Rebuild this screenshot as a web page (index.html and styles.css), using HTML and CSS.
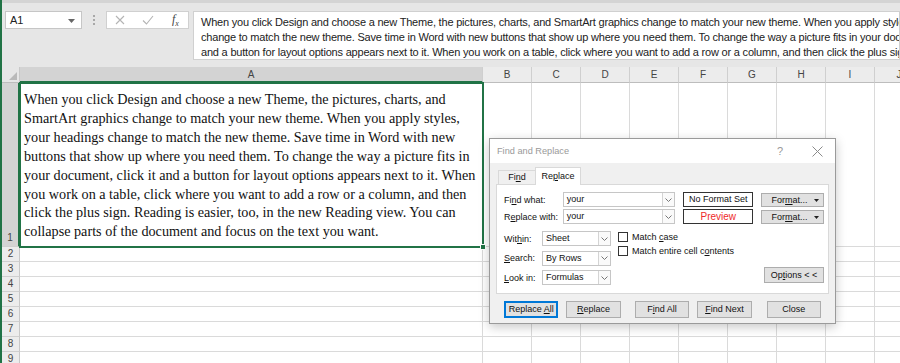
FILE: index.html
```
<!DOCTYPE html>
<html>
<head>
<meta charset="utf-8">
<link rel="stylesheet" href="styles.css">
</head>
<body>
<div class="app">
  <div class="topstrip"></div>
  <div class="fbar">
    <div class="namebox"><span>A1</span><svg class="nb-arrow" width="7" height="4" viewBox="0 0 7 4"><path d="M0 0H7L3.5 4Z" fill="#666"/></svg></div>
    <div class="dots"><i></i><i></i><i></i></div>
    <div class="fnbox">
      <svg class="ico-x" width="10" height="10" viewBox="0 0 10 10"><path d="M1 1L9 9M9 1L1 9" stroke="#b4b4b4" stroke-width="1.1" fill="none"/></svg>
      <svg class="ico-ok" width="12" height="10" viewBox="0 0 12 10"><path d="M1 5.5L4.5 9L11 1" stroke="#b4b4b4" stroke-width="1.1" fill="none"/></svg>
      <span class="fx"><i>f</i><sub>x</sub></span>
    </div>
    <div class="formula">
      <div>When you click Design and choose a new Theme, the pictures, charts, and SmartArt graphics change to match your new theme. When you apply styles, your headings</div>
      <div>change to match the new theme. Save time in Word with new buttons that show up where you need them. To change the way a picture fits in your document, click it</div>
      <div>and a button for layout options appears next to it. When you work on a table, click where you want to add a row or a column, and then click the plus sign.</div>
    </div>
  </div>
  <div class="sheet">
    <div class="corner"><svg width="8" height="8" viewBox="0 0 8 8"><path d="M8 0V8H0Z" fill="#b9b9b9"/></svg></div>
    <div class="ch sel">A</div>
    <div class="ch">B</div>
    <div class="ch">C</div>
    <div class="ch">D</div>
    <div class="ch">E</div>
    <div class="ch">F</div>
    <div class="ch">G</div>
    <div class="ch">H</div>
    <div class="ch">I</div>
    <div class="ch">J</div>

    <div class="rh sel">1</div>
    <div class="cell r1 a1">
      <div class="a1text">When you click Design and choose a new Theme, the pictures, charts, and<br>SmartArt graphics change to match your new theme. When you apply styles,<br>your headings change to match the new theme. Save time in Word with new<br>buttons that show up where you need them. To change the way a picture fits in<br>your document, click it and a button for layout options appears next to it. When<br>you work on a table, click where you want to add a row or a column, and then<br>click the plus sign. Reading is easier, too, in the new Reading view. You can<br>collapse parts of the document and focus on the text you want.</div>
      <span class="handle"></span>
    </div>
    <div class="cell r1"></div><div class="cell r1"></div><div class="cell r1"></div><div class="cell r1"></div><div class="cell r1"></div><div class="cell r1"></div><div class="cell r1"></div><div class="cell r1"></div><div class="cell r1"></div>
  </div>
  <div class="sheet" id="rows"></div>

  <div class="dialog">
    <div class="titlebar">
      <span class="title">Find and Replace</span>
      <span class="qm">?</span>
      <svg class="closex" width="11" height="11" viewBox="0 0 11 11"><path d="M0.5 0.5L10.5 10.5M10.5 0.5L0.5 10.5" stroke="#8a8a8a" stroke-width="1" fill="none"/></svg>
    </div>
    <div class="dbody">
      <div class="tabs">
        <div class="tab">Fi<u>n</u>d</div>
        <div class="tab active">Re<u>p</u>lace</div>
      </div>
      <div class="panel">
        <div class="frow">
          <label class="lbl">Fi<u>n</u>d what:</label>
          <div class="combo wide"><span>your</span><b class="dd"><svg width="7" height="4" viewBox="0 0 7 4"><path d="M0.5 0.5L3.5 3.5L6.5 0.5" stroke="#777" fill="none"/></svg></b></div>
          <div class="fmtbox">No Format Set</div>
          <div class="btn fmt"><span>For<u>m</u>at...</span><svg width="5" height="3" viewBox="0 0 5 3"><path d="M0 0H5L2.5 3Z" fill="#222"/></svg></div>
        </div>
        <div class="frow">
          <label class="lbl">R<u>e</u>place with:</label>
          <div class="combo wide"><span>your</span><b class="dd"><svg width="7" height="4" viewBox="0 0 7 4"><path d="M0.5 0.5L3.5 3.5L6.5 0.5" stroke="#777" fill="none"/></svg></b></div>
          <div class="fmtbox preview">Preview</div>
          <div class="btn fmt"><span>For<u>m</u>at...</span><svg width="5" height="3" viewBox="0 0 5 3"><path d="M0 0H5L2.5 3Z" fill="#222"/></svg></div>
        </div>
        <div class="opts">
          <div class="optcol">
            <div class="orow"><label class="lbl2">Wit<u>h</u>in:</label><div class="combo small"><span>Sheet</span><b class="dd"><svg width="7" height="4" viewBox="0 0 7 4"><path d="M0.5 0.5L3.5 3.5L6.5 0.5" stroke="#777" fill="none"/></svg></b></div></div>
            <div class="orow"><label class="lbl2"><u>S</u>earch:</label><div class="combo small"><span>By Rows</span><b class="dd"><svg width="7" height="4" viewBox="0 0 7 4"><path d="M0.5 0.5L3.5 3.5L6.5 0.5" stroke="#777" fill="none"/></svg></b></div></div>
            <div class="orow"><label class="lbl2"><u>L</u>ook in:</label><div class="combo small"><span>Formulas</span><b class="dd"><svg width="7" height="4" viewBox="0 0 7 4"><path d="M0.5 0.5L3.5 3.5L6.5 0.5" stroke="#777" fill="none"/></svg></b></div></div>
          </div>
          <div class="checks">
            <div class="chk"><span class="box"></span><span>Match <u>c</u>ase</span></div>
            <div class="chk"><span class="box"></span><span>Match entire cell c<u>o</u>ntents</span></div>
          </div>
          <div class="optbtn"><div class="btn options"><span>Op<u>t</u>ions &lt; &lt;</span></div></div>
        </div>
      </div>
      <div class="btnrow">
        <div class="btn act default"><span>Replace <u>A</u>ll</span></div>
        <div class="btn act"><span><u>R</u>eplace</span></div>
        <div class="btn act gap"><span>F<u>i</u>nd All</span></div>
        <div class="btn act"><span><u>F</u>ind Next</span></div>
        <div class="btn act gap2"><span>Close</span></div>
      </div>
    </div>
  </div>
</div>
<script>
  var r = document.getElementById('rows');
  var h = '';
  for (var i = 2; i <= 10; i++) {
    h += '<div class="rh">' + i + '</div>';
    for (var j = 0; j < 10; j++) h += '<div class="cell"></div>';
  }
  r.innerHTML = h;
</script>
</body>
</html>
```
FILE: styles.css
```
* { box-sizing: border-box; }
html, body { margin: 0; padding: 0; }
body { width: 900px; height: 363px; overflow: hidden; background: #fff; }
.app { position: relative; width: 900px; height: 363px; overflow: hidden; border-left: 2px solid #217346; background: #e6e6e6; }

.topstrip { height: 3px; background: #d4d4d4; }
.fbar { display: flex; align-items: flex-start; height: 64px; padding-top: 8px; padding-left: 3px; }
.namebox { width: 77px; height: 18px; background: #fff; border: 1px solid #c6c6c6; display: flex; align-items: center; justify-content: space-between; padding: 0 6px 0 4px; font: 11px "Liberation Sans", sans-serif; color: #222; }
.nb-arrow { margin-top: 1px; }
.dots { width: 24px; height: 18px; display: flex; flex-direction: column; align-items: center; justify-content: center; gap: 2px; }
.dots i { width: 2px; height: 2px; background: #a8a8a8; display: block; }
.fnbox { width: 83px; height: 18px; background: #fff; border: 1px solid #d0d0d0; display: flex; align-items: center; padding-left: 8px; }
.ico-ok { margin-left: 17px; }
.fx { margin-left: 18px; font: italic 12px "Liberation Serif", serif; color: #444; }
.fx i { font-style: italic; }
.fx sub { font-size: 8px; }
.formula { margin-left: 4px; flex: 1; min-width: 0; height: 49px; background: #fff; border: 1px solid #d0d0d0; padding: 3px 0 0 7px; overflow: hidden; font: 11px/15px "Liberation Sans", sans-serif; letter-spacing: -0.2px; color: #222; white-space: nowrap; }

.sheet { display: grid; grid-template-columns: 18px 463px repeat(9, 49px); }
.corner { height: 16px; background: #e6e6e6; border-right: 1px solid #c8c8c8; border-bottom: 1px solid #bdbdbd; display: flex; align-items: flex-end; justify-content: flex-end; padding: 0 2px 2px 0; }
.ch { height: 16px; background: #ececec; border-right: 1px solid #cfcfcf; border-bottom: 1px solid #bdbdbd; font: 10px/15px "Liberation Sans", sans-serif; color: #444; text-align: center; }
.ch.sel { background: #d3d3d3; border-bottom: 2px solid #217346; }
.rh { background: #ececec; border-right: 1px solid #c8c8c8; border-bottom: 1px solid #cfcfcf; font: 10px/14px "Liberation Sans", sans-serif; color: #444; text-align: center; height: 15px; display: flex; align-items: flex-end; justify-content: center; }
.rh.sel { height: 164px; background: #d3d3d3; border-right: 2px solid #217346; padding-bottom: 1px; }
.cell { background: #fff; border-right: 1px solid #dadada; border-bottom: 1px solid #dadada; height: 15px; }
.cell.r1 { height: 164px; }
.cell.a1 { position: relative; outline: 2px solid #217346; outline-offset: -1px; z-index: 1; padding: 7px 0 0 4px; }
.a1text { font: 14.2px/18.9px "Liberation Serif", serif; color: #111; white-space: nowrap; }
.handle { position: absolute; right: -4px; bottom: -4px; width: 6px; height: 6px; background: #217346; border: 1px solid #fff; }

.dialog { position: absolute; left: 487px; top: 138px; width: 347px; height: 186px; border: 1px solid #9a9a9a; background: #f0f0f0; box-shadow: 0 3px 10px rgba(0,0,0,.22); font: 9px "Liberation Sans", sans-serif; color: #111; z-index: 5; }
.titlebar { height: 24px; background: #fff; display: flex; align-items: center; padding-left: 7px; }
.title { flex: 1; color: #999; font-size: 9.2px; }
.qm { color: #999; font-size: 11px; margin-right: 29px; }
.closex { margin-right: 12px; }
.dbody { padding: 4px 6px 0 6px; }
.tabs { display: flex; align-items: flex-end; padding-left: 2px; height: 17px; }
.tab { height: 14px; width: 38px; border: 1px solid #d9d9d9; border-bottom: none; text-align: center; line-height: 13px; background: #f0f0f0; }
.tab.active { height: 18px; width: 46px; background: #fff; line-height: 16px; margin-bottom: -1px; position: relative; z-index: 1; margin-left: -1px; }
.panel { height: 110px; background: #fff; border: 1px solid #d9d9d9; padding: 7px 4px 0 7px; }
.frow { display: flex; align-items: center; height: 15px; margin-bottom: 2px; white-space: nowrap; }
.lbl { width: 59px; }
.combo { height: 15px; border: 1px solid #c6c6c6; background: #fff; display: flex; align-items: stretch; }
.combo span { flex: 1; padding-left: 3px; line-height: 13px; }
.combo .dd { width: 12px; border-left: 1px solid #d4d4d4; display: flex; align-items: center; justify-content: center; background: #fafafa; }
.combo.wide { width: 113px; }
.fmtbox { width: 70px; height: 15px; margin-left: 8px; border: 1px solid #333; text-align: center; line-height: 13px; }
.fmtbox.preview { color: #ee2a2a; font-size: 10px; }
.btn { background: #e1e1e1; border: 1px solid #adadad; text-align: center; white-space: nowrap; }
.fmt { width: 63px; height: 14px; margin-left: 8px; line-height: 12px; position: relative; padding-right: 6px; }
.fmt svg { position: absolute; right: 4px; top: 5px; }
.opts { display: flex; margin-top: 7px; }
.optcol { width: 107px; flex: none; }
.orow { display: flex; align-items: center; height: 15px; margin-bottom: 4.5px; white-space: nowrap; }
.lbl2 { width: 38px; }
.combo.small { width: 69px; }
.checks { margin-left: 7px; padding-top: 1px; white-space: nowrap; }
.chk { display: flex; align-items: center; height: 10px; margin-bottom: 4px; }
.chk .box { width: 10px; height: 10px; border: 1px solid #333; background: #fff; margin-right: 4px; flex: none; }
.optbtn { flex: 1; display: flex; justify-content: flex-end; align-items: flex-end; padding-bottom: 7px; }
.options { width: 60px; height: 16px; line-height: 14px; }
.btnrow { display: flex; margin-top: 7px; padding-left: 8px; }
.act { width: 56px; height: 17px; line-height: 15px; margin-right: 8px; }
.act.gap { margin-left: 6px; }
.act.gap2 { margin-left: 7px; }
.default { border-color: #0078d7; box-shadow: inset 0 0 0 1px #0078d7; }
u { text-decoration: underline; text-underline-offset: 1px; }
```
